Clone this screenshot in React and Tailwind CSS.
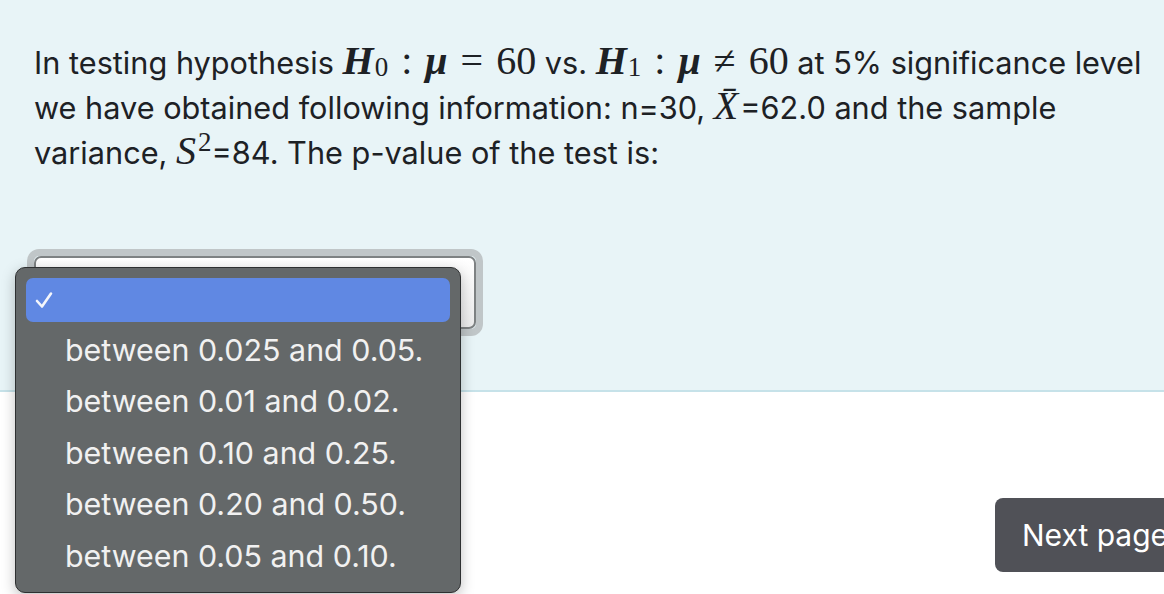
import React from 'react';

const options = [
  'between 0.025 and 0.05.',
  'between 0.01 and 0.02.',
  'between 0.10 and 0.25.',
  'between 0.20 and 0.50.',
  'between 0.05 and 0.10.',
];

// math pieces rendered in a serif face, like MathJax output
const M = ({ children }) => (
  <span className="font-['Liberation_Serif',serif] text-[40px] leading-none">{children}</span>
);
const Rel = ({ children }) => <span className="mx-[13px]">{children}</span>;
const Sub = ({ children }) => (
  <sub className="text-[27px] not-italic font-normal ml-[1px] relative top-[2px]">{children}</sub>
);

const App = () => {
  return (
    <div className="relative w-[1164px] h-[594px] overflow-hidden bg-white font-['Inter','Noto_Sans',sans-serif] text-[#1d2125]">
      {/* Question */}
      <div className="h-[392px] bg-[#e8f4f7] border-b-2 border-[#c6e2e9] pt-[40px]">
        <p className="pl-[34px] text-[30.7px] leading-[45px] whitespace-nowrap">
          In testing hypothesis{' '}
          <M>
            <b><i>H</i></b><Sub>0</Sub><Rel>:</Rel><b><i>μ</i></b><Rel>=</Rel>60
          </M>{' '}
          vs.{' '}
          <M>
            <b><i>H</i></b><Sub>1</Sub><Rel>:</Rel><b><i>μ</i></b><Rel>≠</Rel>60
          </M>{' '}
          at 5% significance level
          <br />
          we have obtained following information: n=30, <M><i className="mr-[2px]">X̄</i></M>=62.0 and the sample
          <br />
          variance, <M><i>S</i><sup className="text-[27px] ml-[2px]">2</sup></M>=84. The p-value of the test is:
        </p>

        {/* Select box */}
        <div className="ml-[27px] mt-[74px] w-[456px] h-[87px] rounded-[12px] border-[7px] border-[#c0c6c8]">
          <div className="h-full rounded-[7px] border-2 border-[#7e8283] bg-gradient-to-b from-white to-[#ececec]" />
        </div>
      </div>

      {/* Next page */}
      <div className="pl-[995px] pt-[106px]">
        <button className="h-[74px] pl-[27px] pr-[30px] rounded-[8px] bg-[#505157] text-white text-[30px] whitespace-nowrap">
          Next page
        </button>
      </div>

      {/* Open dropdown menu */}
      <div className="absolute left-[15px] top-[267px] w-[446px] h-[326px] rounded-[10px] border border-[#2e3031] bg-[#646869] px-[10px] pt-[10px] shadow-[0_4px_14px_rgba(0,0,0,0.25)]">
        <div className="h-[44px] rounded-[7px] bg-[#6088e3] flex items-center pl-[9px] mb-[3px]">
          <svg width="18" height="18" viewBox="0 0 18 18" fill="none">
            <path d="M2 10 L7 15.5 L16 2.5" stroke="#f4f6fb" strokeWidth="2.6" strokeLinecap="round" strokeLinejoin="round" />
          </svg>
        </div>
        {options.map((o) => (
          <div key={o} className="h-[51.5px] flex items-center pl-[39px] text-[30.4px] text-[#f1f1f1]">
            {o}
          </div>
        ))}
      </div>
    </div>
  );
};

export default App;
